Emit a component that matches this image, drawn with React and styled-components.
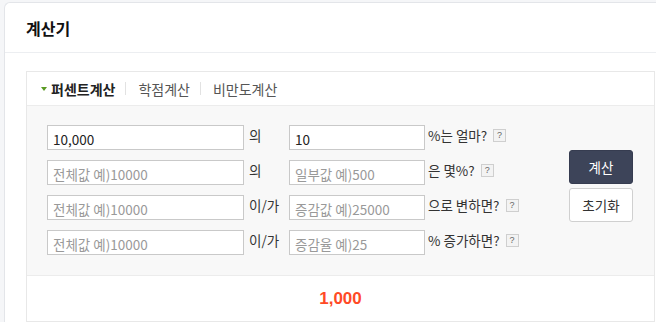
import React from "react";
import styled, { createGlobalStyle } from "styled-components";

const Global = createGlobalStyle`
  html, body { margin: 0; padding: 0; }
  body {
    background: #f5f6f8;
    font-family: "Noto Sans CJK KR", "Noto Sans", sans-serif;
    overflow: hidden;
    width: 656px;
    height: 322px;
  }
`;

const Card = styled.div`
  margin: 2px 0 0 4px;
  width: 652px;
  height: 320px;
  overflow: hidden;
  background: #fff;
  border: 1px solid #e3e5e9;
  border-right: none;
  border-bottom: none;
  border-radius: 6px 0 0 0;
  box-sizing: border-box;
`;

const Header = styled.div`
  height: 49px;
  display: flex;
  align-items: center;
  padding-left: 21px;
  border-bottom: 1px solid #eceef1;
`;

const Title = styled.h2`
  margin: 0;
  font-size: 16px;
  font-weight: 700;
  color: #111;
  line-height: 1;
`;

const Body = styled.div`
  padding: 18px 0 0 21px;
`;

const Box = styled.div`
  width: 629px;
  border: 1px solid #e8e8e8;
  box-sizing: border-box;
`;

const Tabs = styled.div`
  height: 33px;
  display: flex;
  align-items: center;
  padding-left: 14px;
  border-bottom: 1px solid #ececec;
  font-size: 14px;
  line-height: 1;
`;

const Tab = styled.span`
  display: flex;
  align-items: center;
  color: ${(p) => (p.$active ? "#222" : "#555")};
  font-weight: ${(p) => (p.$active ? 700 : 400)};
`;

const Caret = styled.span`
  width: 0;
  height: 0;
  border-left: 3px solid transparent;
  border-right: 3px solid transparent;
  border-top: 4px solid #5a9a24;
  margin-right: 4px;
`;

const Sep = styled.span`
  width: 1px;
  height: 13px;
  background: #e2e2e2;
  margin: 0 12px 0 10px;
`;

const Form = styled.div`
  background: #f8f8f8;
  padding: 19px 0 20px 20px;
  display: flex;
  align-items: center;
  border-bottom: 1px solid #ececec;
`;

const Rows = styled.div`
  width: 523px;
  display: flex;
  flex-direction: column;
  gap: 10px;
`;

const Row = styled.div`
  display: flex;
  align-items: flex-start;
  height: 25px;
`;

const Input = styled.input`
  box-sizing: border-box;
  width: ${(p) => p.$w}px;
  height: 25px;
  border: 1px solid #c9c9c9;
  background: #fff;
  padding: 2px 0 0 5px;
  font-family: "Noto Sans CJK KR", sans-serif;
  font-size: 13.5px;
  color: #222;
  outline: none;
  &::placeholder { color: #999; }
`;

const Label = styled.span`
  width: ${(p) => p.$w}px;
  padding-left: ${(p) => p.$pl}px;
  box-sizing: border-box;
  font-size: 13.5px;
  line-height: 16px;
  padding-top: 2px;
  color: #333;
  display: flex;
  align-items: center;
  white-space: nowrap;
`;

const Help = styled.span`
  display: inline-flex;
  align-items: center;
  justify-content: center;
  width: 11px;
  height: 11px;
  border: 1px solid #cfcfcf;
  background: #f3f3f3;
  color: #666;
  font-size: 9px;
  font-family: "Liberation Sans", sans-serif;
  margin-left: 6px;
  line-height: 1;
`;

const Buttons = styled.div`
  display: flex;
  flex-direction: column;
  gap: 4px;
  margin-left: -1px;
  padding-bottom: 9px;
`;

const Button = styled.button`
  width: 64px;
  height: 34px;
  border-radius: 3px;
  font-family: "Noto Sans CJK KR", sans-serif;
  font-size: 13.5px;
  cursor: pointer;
  background: ${(p) => (p.$primary ? "#3d4459" : "#fff")};
  color: ${(p) => (p.$primary ? "#fff" : "#333")};
  border: 1px solid ${(p) => (p.$primary ? "#363c50" : "#d0d0d0")};
  padding: 0;
`;

const Result = styled.div`
  height: 45px;
  display: flex;
  align-items: center;
  justify-content: center;
  font-family: "Liberation Sans", Arial, sans-serif;
  font-size: 17px;
  font-weight: 700;
  color: #ff4a26;
`;

const rows = [
  { a: "10,000", ap: "", l: "의", b: "10", bp: "", s: "%는 얼마?" },
  { a: "", ap: "전체값 예)10000", l: "의", b: "", bp: "일부값 예)500", s: "은 몇%?" },
  { a: "", ap: "전체값 예)10000", l: "이/가", b: "", bp: "증감값 예)25000", s: "으로 변하면?" },
  { a: "", ap: "전체값 예)10000", l: "이/가", b: "", bp: "증감율 예)25", s: "% 증가하면?" },
];

export default function App() {
  return (
    <>
      <Global />
      <Card>
        <Header>
          <Title>계산기</Title>
        </Header>
        <Body>
          <Box>
            <Tabs>
              <Tab $active>
                <Caret />
                퍼센트계산
              </Tab>
              <Sep />
              <Tab>학점계산</Tab>
              <Sep />
              <Tab>비만도계산</Tab>
            </Tabs>
            <Form>
              <Rows>
                {rows.map((r, i) => (
                  <Row key={i}>
                    <Input $w={197} defaultValue={r.a} placeholder={r.ap} />
                    <Label $w={45} $pl={5}>{r.l}</Label>
                    <Input $w={136} defaultValue={r.b} placeholder={r.bp} />
                    <Label $w={140} $pl={3}>
                      {r.s}
                      <Help>?</Help>
                    </Label>
                  </Row>
                ))}
              </Rows>
              <Buttons>
                <Button $primary>계산</Button>
                <Button>초기화</Button>
              </Buttons>
            </Form>
            <Result>1,000</Result>
          </Box>
        </Body>
      </Card>
    </>
  );
}
